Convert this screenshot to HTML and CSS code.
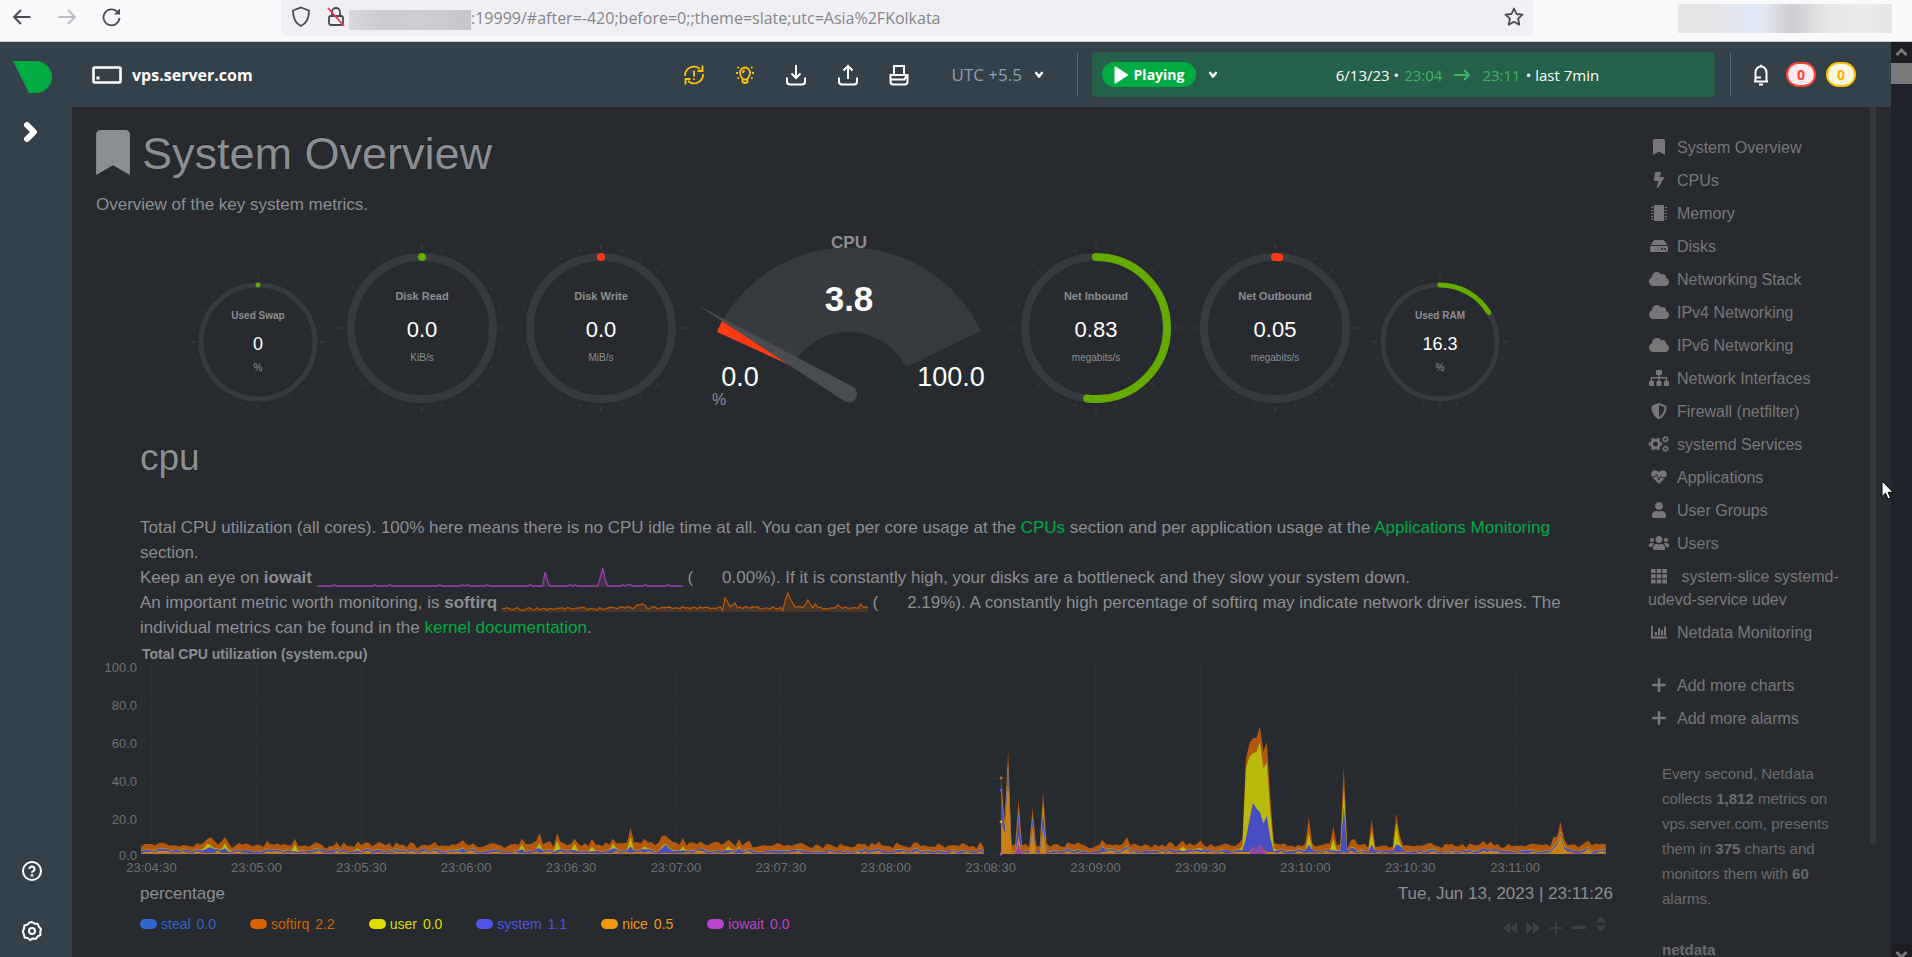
FILE: index.html
```
<!DOCTYPE html>
<html lang="en">
<head>
  <meta charset="UTF-8" />
  <meta name="viewport" content="width=device-width, initial-scale=1.0"/>
  <title>vps.server.com netdata dashboard</title>
  <link rel="stylesheet" href="styles.css">
</head>
<body>
  <!-- icons used more than once -->
  <svg class="defs" aria-hidden="true">
    <symbol id="i-bookmark" viewBox="0 0 384 512"><path d="M0 512V48C0 21.49 21.49 0 48 0h288c26.51 0 48 21.49 48 48v464L192 400 0 512z"/></symbol>
    <symbol id="i-cloud" viewBox="0 0 640 512"><path d="M537.6 226.6c4.1-10.7 6.4-22.4 6.4-34.6 0-53-43-96-96-96-19.7 0-38.1 6-53.3 16.2C367 64.2 315.3 32 256 32c-88.4 0-160 71.6-160 160 0 2.7.1 5.4.2 8.1C40.2 219.8 0 273.2 0 336c0 79.5 64.5 144 144 144h368c70.7 0 128-57.3 128-128 0-61.9-44-113.6-102.4-125.4z"/></symbol>
    <symbol id="i-plus" viewBox="0 0 448 512"><path d="M184 64q0-32 32-32h16q32 0 32 32v152h152q32 0 32 32v16q0 32-32 32H264v152q0 32-32 32h-16q-32 0-32-32V296H32q-32 0-32-32v-16q0-32 32-32h152z"/></symbol>
    <symbol id="i-caret" viewBox="0 0 10 8"><path d="M2.200 2L5 5.500 7.800 2" fill="none" stroke="currentColor" stroke-width="2.600" stroke-linecap="round" stroke-linejoin="round"/></symbol>
    <symbol id="ring" viewBox="-86 -86 172 172">
      <circle r="71" fill="none" stroke="#373a3e" stroke-width="8"/>
      <circle r="80" fill="none" stroke="#3a3d41" stroke-width="3" pathLength="360" stroke-dasharray="0.8 14.2" stroke-dashoffset="0.4"/>
      <circle r="82" fill="none" stroke="#3a3d41" stroke-width="6" pathLength="360" stroke-dasharray="0.8 89.2" stroke-dashoffset="0.4"/>
    </symbol>
    <symbol id="ring-small" viewBox="-70 -70 140 140">
      <circle r="57" fill="none" stroke="#373a3e" stroke-width="5"/>
      <circle r="64" fill="none" stroke="#3a3d41" stroke-width="3" pathLength="360" stroke-dasharray="0.8 14.2" stroke-dashoffset="0.4"/>
      <circle r="65" fill="none" stroke="#3a3d41" stroke-width="6" pathLength="360" stroke-dasharray="0.8 89.2" stroke-dashoffset="0.4"/>
    </symbol>
  </svg>

  <div class="browser">
    <div class="browser-nav">
      <button aria-label="Back"><svg width="20" height="20" viewBox="0 0 20 20"><path d="M18.500 10H2M9 3l-7 7 7 7"/></svg></button>
      <button aria-label="Forward" disabled><svg width="20" height="20" viewBox="0 0 20 20"><path d="M1.500 10H18M11 3l7 7-7 7"/></svg></button>
      <button aria-label="Reload"><svg width="20" height="20" viewBox="0 0 20 20"><path d="M17.500 11A8 8 0 1 1 15 4.500"/><path d="M18 1.500v6h-6z" fill="currentColor" stroke="none"/></svg></button>
    </div>
    <div class="urlbar">
      <svg width="20" height="22" viewBox="0 0 20 22"><path d="M10 1.500l8 3c0 8-2 12.500-8 15.500C4 17 2 12.500 2 4.500z"/></svg>
      <svg class="lock" width="20" height="22" viewBox="0 0 20 22"><rect x="3" y="10" width="14" height="9" rx="2"/><path d="M6 10V6a4 4 0 0 1 8 0v4"/><path class="slash" d="M2 2l16 18"/></svg>
      <span class="masked-host"></span>
      <input type="text" aria-label="Address" value=":19999/#after=-420;before=0;;theme=slate;utc=Asia%2FKolkata">
      <button aria-label="Bookmark this page"><svg width="22" height="22" viewBox="0 0 22 22"><path d="M11 2.500l2.500 5.500 6 .7-4.400 4 1.200 6L11 15.800 5.700 18.700l1.200-6-4.400-4 6-.7z" stroke-linejoin="round"/></svg></button>
    </div>
    <div class="masked-tools"></div>
  </div>

  <div class="window">
    <div class="app">
      <nav class="rail">
        <svg class="logo" width="40" height="32" viewBox="0 0 40 32"><path d="M0 0h23a16 16 0 0 1 0 32h-7z" fill="#00ab44"/></svg>
        <button class="expand" aria-label="Open spaces"><svg width="16" height="22" viewBox="0 0 16 22"><path d="M4 4l7 7-7 7"/></svg></button>
        <button class="help" aria-label="Help"><svg width="22" height="22" viewBox="0 0 22 22"><circle cx="11" cy="11" r="9"/><path d="M8.500 9a2.500 2.500 0 1 1 3.700 2.100q-1.200.6-1.200 1.600"/><circle cx="11" cy="15.200" r=".5"/></svg></button>
        <button class="settings" aria-label="Settings"><svg width="22" height="22" viewBox="0 0 22 22"><path d="M11 2l2.600 1.700 3.100.1 1.100 2.900 2.200 2.200-.8 3 .3 3.100-2.800 1.300-1.800 2.500-3.100-.3L9 20l-2.400-2-3-.6-.7-3L1.800 11.500l1.200-2.900.4-3.100 3-.9L8.700 2.500z" stroke-linejoin="round"/><circle cx="11" cy="11" r="3"/></svg></button>
      </nav>

      <div class="workspace">
        <header class="topbar">
          <svg class="node-icon" width="30" height="18" viewBox="0 0 30 18"><rect x="1.500" y="1.500" width="27" height="15" rx="1" fill="none" stroke="#fff" stroke-width="2.600"/><rect x="4.500" y="10.500" width="3" height="3" fill="#fff"/></svg>
          <span class="host">vps.server.com</span>

          <div class="tools">
            <button class="warn" aria-label="Update available"><svg width="22" height="22" viewBox="0 0 22 22"><path d="M2 12a9 9 0 0 1 15-7M20 10a9 9 0 0 1-15 7M19.500 1.500V7h-5M2.500 20.500V15h5M11 6.500v6M11 14.500v1.500"/></svg></button>
            <button class="warn" aria-label="What's new"><svg width="20" height="22" viewBox="0 0 20 22"><path d="M7.500 15.500c0-2-2.500-3-2.500-6.500a5 5.500 0 0 1 10 0c0 3.500-2.500 4.500-2.500 6.500zM7.500 15.500V18q2.500 2 5 0v-2.500M7.800 9a2.300 2.500 0 0 1 2-2.500M1 9h2M17 9h2M2.500 3l1.400 1M17.500 3l-1.400 1M2.500 14.500l1.400-1M17.500 14.500l-1.400-1"/></svg></button>
            <button aria-label="Import"><svg width="22" height="22" viewBox="0 0 22 22"><path d="M11 1v13M6.500 9.500L11 14l4.500-4.500M2 13.500v4q0 3 3 3h12q3 0 3-3v-4"/></svg></button>
            <button aria-label="Export"><svg width="22" height="22" viewBox="0 0 22 22"><path d="M11 15V2M6.500 6.500L11 2l4.500 4.500M2 13.500v4q0 3 3 3h12q3 0 3-3v-4"/></svg></button>
            <button aria-label="Print"><svg width="20" height="22" viewBox="1 0 20 22"><path d="M6 11V2h10v9M2.500 11h17v6.500q0 3-3 3h-11q-3 0-3-3zM3 15.500h13.500l2-4"/></svg></button>
          </div>

          <button class="utc">UTC +5.5 <svg width="10" height="8"><use href="#i-caret"/></svg></button>

          <div class="timebox">
            <button class="playing"><svg width="14" height="18" viewBox="0 0 14 18"><path d="M1.500 1.500L13 9 1.500 16.500z" fill="#fff" stroke="#fff" stroke-width="2" stroke-linejoin="round"/></svg>Playing</button>
            <button class="play-menu" aria-label="Playback options"><svg width="10" height="8"><use href="#i-caret"/></svg></button>
            <button class="range">6/13/23 • <span>23:04</span>
              <svg width="18" height="14" viewBox="0 0 18 14"><path d="M1 7h15M11 2l5 5-5 5"/></svg>
              <span>23:11</span> • last 7min</button>
          </div>

          <div class="alerts">
            <button class="bell" aria-label="Alerts"><svg width="18" height="22" viewBox="0 0 18 22"><path d="M2 17.500h14M3.500 17V8.500a5.500 6 0 0 1 11 0V17M7 20.500h4M9 2V.8M4 13.500h5"/></svg></button>
            <button class="pill critical">0</button>
            <button class="pill warning">0</button>
          </div>
        </header>

        <div class="page">
          <main>
            <h1><svg width="34" height="45"><use href="#i-bookmark"/></svg>System Overview</h1>
            <p class="lead">Overview of the key system metrics.</p>

            <div class="gauges">
              <svg class="gauge small" viewBox="-75 -112 150 183">
                <use href="#ring-small" x="-70" y="-70" width="140" height="140"/>
                <circle class="arc green" r="57" stroke-width="5" pathLength="100" stroke-dasharray="0 100"/>
                <text class="label" y="-23">Used Swap</text><text class="value" y="8">0</text><text class="unit" y="29">%</text>
              </svg>
              <svg class="gauge" viewBox="-89 -98 179 183">
                <use href="#ring" x="-86" y="-86" width="172" height="172"/>
                <circle class="arc green" r="71" stroke-width="8" pathLength="100" stroke-dasharray="0 100"/>
                <text class="label" y="-28">Disk Read</text><text class="value" y="9">0.0</text><text class="unit" y="33">KiB/s</text>
              </svg>
              <svg class="gauge" viewBox="-89 -98 179 183">
                <use href="#ring" x="-86" y="-86" width="172" height="172"/>
                <circle class="arc red" r="71" stroke-width="8" pathLength="100" stroke-dasharray="0 100"/>
                <text class="label" y="-28">Disk Write</text><text class="value" y="9">0.0</text><text class="unit" y="33">MiB/s</text>
              </svg>
              <svg class="gauge cpu" viewBox="-158 -164 316 183">
                <path d="M-132-63A146 146 0 0 1 132-63L57-27A64 64 0 0 0-57-27z" fill="#373a3e"/>
                <path d="M-132-62L-127-73-57-28z" fill="#ff3912"/>
                <path d="M-151.500-89L4.500-7A8 8 0 1 1-5 7z" fill="#494c50"/>
                <text class="label" y="-146">CPU</text><text class="value" y="-83">3.8</text>
                <text class="bound" x="-109" y="-8">0.0</text><text class="bound" x="102" y="-8">100.0</text>
                <text class="unit" x="-130" y="11">%</text>
              </svg>
              <svg class="gauge" viewBox="-89 -98 179 183">
                <use href="#ring" x="-86" y="-86" width="172" height="172"/>
                <circle class="arc green" r="71" stroke-width="8" pathLength="100" stroke-dasharray="52 100"/>
                <text class="label" y="-28">Net Inbound</text><text class="value" y="9">0.83</text><text class="unit" y="33">megabits/s</text>
              </svg>
              <svg class="gauge" viewBox="-89 -98 179 183">
                <use href="#ring" x="-86" y="-86" width="172" height="172"/>
                <circle class="arc red" r="71" stroke-width="8" pathLength="100" stroke-dasharray="1 100"/>
                <text class="label" y="-28">Net Outbound</text><text class="value" y="9">0.05</text><text class="unit" y="33">megabits/s</text>
              </svg>
              <svg class="gauge small" viewBox="-75 -112 150 183">
                <use href="#ring-small" x="-70" y="-70" width="140" height="140"/>
                <circle class="arc green" r="57" stroke-width="5" pathLength="100" stroke-dasharray="16.3 100"/>
                <text class="label" y="-23">Used RAM</text><text class="value" y="8">16.3</text><text class="unit" y="29">%</text>
              </svg>
            </div>

            <section class="cpu-section">
              <h2>cpu</h2>
              <p>Total CPU utilization (all cores). 100% here means there is no CPU idle time at all. You can get per core usage at the <a href="#cpus">CPUs</a> section and per application usage at the <a href="#apps">Applications Monitoring</a> section.</p>
              <p>Keep an eye on <b>iowait</b> <svg class="spark" id="sparkIowait" width="366" height="24"></svg> (<span class="num">0.00</span>%). If it is constantly high, your disks are a bottleneck and they slow your system down.</p>
              <p>An important metric worth monitoring, is <b>softirq</b> <svg class="spark" id="sparkSoftirq" width="366" height="24"></svg> (<span class="num">2.19</span>%). A constantly high percentage of softirq may indicate network driver issues. The individual metrics can be found in the <a href="#docs">kernel documentation</a>.</p>
            </section>

            <h3>Total CPU utilization (system.cpu)</h3>
            <svg class="chart" id="cpuChart" viewBox="0 0 1517 216" role="img" aria-label="Total CPU utilization"></svg>
            <div class="chart-info"><span>percentage</span><time>Tue, Jun 13, 2023 | 23:11:26</time></div>
            <div class="chart-foot">
              <ul class="legend">
                <li class="steal">steal <span>0.0</span></li>
                <li class="softirq">softirq <span>2.2</span></li>
                <li class="user">user <span>0.0</span></li>
                <li class="system">system <span>1.1</span></li>
                <li class="nice">nice <span>0.5</span></li>
                <li class="iowait">iowait <span>0.0</span></li>
              </ul>
              <div class="chart-tools">
                <button aria-label="Pan left"><svg width="16" height="14" viewBox="0 0 16 14"><path d="M8 1v12L1 7zM15 1v12L8 7z"/></svg></button>
                <button aria-label="Pan right"><svg width="16" height="14" viewBox="0 0 16 14"><path d="M1 1v12l7-6zM8 1v12l7-6z"/></svg></button>
                <button aria-label="Zoom in"><svg width="16" height="14"><use href="#i-plus"/></svg></button>
                <button aria-label="Zoom out"><svg width="16" height="14" viewBox="0 0 16 14"><rect x="1" y="5" width="14" height="3" rx="1"/></svg></button>
                <button class="resize" aria-label="Resize"><svg width="12" height="16" viewBox="0 0 12 16"><path d="M6 0l5.500 6.500H.5zM6 16L.5 9.500h11z"/></svg></button>
              </div>
            </div>
          </main>

          <aside>
            <ul class="menu">
              <li><a href="#system"><svg><use href="#i-bookmark"/></svg>System Overview</a></li>
              <li><a href="#cpus"><svg viewBox="0 0 320 512"><path d="M296 160H180.600l42.600-129.800C227.200 15 215.700 0 200 0H56C44 0 33.800 8.900 32.200 20.800l-32 240C-1.700 275.200 9.500 288 24 288h118.700L96.600 482.500c-3.600 15.200 8 29.500 23.300 29.500 8.400 0 16.400-4.400 20.800-12l176-304c9.300-15.900-2.200-36-20.700-36z"/></svg>CPUs</a></li>
              <li><a href="#mem"><svg viewBox="0 0 16 16"><rect x="3" width="10" height="16" rx="1"/><path d="M0 2.500h16M0 5.500h16M0 8.500h16M0 11.500h16M0 14h16" stroke="currentColor" stroke-width="1.200" stroke-dasharray="2.300 11.400"/></svg>Memory</a></li>
              <li><a href="#disk"><svg viewBox="0 0 576 512"><path d="M576 304v96c0 26.510-21.490 48-48 48H48c-26.510 0-48-21.490-48-48v-96c0-26.510 21.490-48 48-48h480c26.510 0 48 21.490 48 48zm-48-80a79.557 79.557 0 0 1 30.777 6.165L462.250 85.374A48.003 48.003 0 0 0 422.311 64H153.689a48 48 0 0 0-39.938 21.374L17.223 230.165A79.557 79.557 0 0 1 48 224h480zm-48 96c-17.673 0-32 14.327-32 32s14.327 32 32 32 32-14.327 32-32-14.327-32-32-32zm-96 0c-17.673 0-32 14.327-32 32s14.327 32 32 32 32-14.327 32-32-14.327-32-32-32z"/></svg>Disks</a></li>
              <li><a href="#net"><svg><use href="#i-cloud"/></svg>Networking Stack</a></li>
              <li><a href="#ipv4"><svg><use href="#i-cloud"/></svg>IPv4 Networking</a></li>
              <li><a href="#ipv6"><svg><use href="#i-cloud"/></svg>IPv6 Networking</a></li>
              <li><a href="#ifaces"><svg viewBox="0 0 20 16"><rect x="7" width="6" height="5" rx="1"/><rect y="11" width="5" height="5" rx="1"/><rect x="7.500" y="11" width="5" height="5" rx="1"/><rect x="15" y="11" width="5" height="5" rx="1"/><path d="M10 5v6M2.500 11V7.800h15V11" fill="none" stroke="currentColor" stroke-width="1.400"/></svg>Network Interfaces</a></li>
              <li><a href="#firewall"><svg viewBox="0 0 512 512"><path d="M466.500 83.700l-192-80a48.150 48.150 0 0 0-36.900 0l-192 80C27.700 91.100 16 108.600 16 128c0 198.500 114.500 335.700 221.500 380.300 11.800 4.900 25.100 4.900 36.900 0C360.100 472.600 496 349.300 496 128c0-19.400-11.700-36.900-29.500-44.300zM256.100 446.300l-.1-381 175.900 73.300c-3.300 151.400-82.100 261.100-175.800 307.700z"/></svg>Firewall (netfilter)</a></li>
              <li><a href="#services"><svg viewBox="0 0 20 16"><g fill="none" stroke="currentColor"><circle cx="6.500" cy="8" r="3.900" stroke-width="2.800"/><circle cx="6.500" cy="8" r="6" stroke-width="1.600" pathLength="12" stroke-dasharray="1 1" stroke-dashoffset=".5"/><circle cx="16.500" cy="3.200" r="1.900" stroke-width="1.400"/><circle cx="16.500" cy="3.200" r="3" stroke-width="1" pathLength="12" stroke-dasharray="1 1"/><circle cx="16.500" cy="12.800" r="1.900" stroke-width="1.400"/><circle cx="16.500" cy="12.800" r="3" stroke-width="1" pathLength="12" stroke-dasharray="1 1"/></g></svg>systemd Services</a></li>
              <li><a href="#applications"><svg viewBox="0 0 16 16"><path d="M8 15L1.300 8.200C-.6 6 .1 1.400 4 1.200c2 0 3 1 4 2.200 1-1.200 2-2.200 4-2.200 3.900.2 4.600 4.800 2.700 7z"/><path class="cut" d="M0 7.800h4.200l1.300-2.600 2.200 6 2-4.400 1 1.800H16"/></svg>Applications</a></li>
              <li><a href="#groups"><svg viewBox="0 0 448 512"><path d="M224 256c70.700 0 128-57.300 128-128S294.700 0 224 0 96 57.300 96 128s57.300 128 128 128zm89.600 32h-16.700c-22.200 10.200-46.900 16-72.900 16s-50.600-5.800-72.900-16h-16.700C60.200 288 0 348.200 0 422.400V464c0 26.500 21.500 48 48 48h352c26.500 0 48-21.500 48-48v-41.600c0-74.200-60.200-134.400-134.400-134.400z"/></svg>User Groups</a></li>
              <li><a href="#users"><svg viewBox="0 0 640 512"><path d="M96 224c35.300 0 64-28.700 64-64s-28.700-64-64-64-64 28.700-64 64 28.700 64 64 64zm448 0c35.300 0 64-28.700 64-64s-28.700-64-64-64-64 28.700-64 64 28.700 64 64 64zm32 32h-64c-17.600 0-33.500 7.100-45.100 18.600 40.300 22.100 68.900 62 75.100 109.400h66c17.700 0 32-14.300 32-32v-32c0-35.300-28.700-64-64-64zm-256 0c61.900 0 112-50.100 112-112S381.900 32 320 32 208 82.100 208 144s50.100 112 112 112zm76.800 32h-8.300c-20.800 10-43.900 16-68.500 16s-47.600-6-68.500-16h-8.300C179.600 288 128 339.600 128 403.200V432c0 26.500 21.500 48 48 48h288c26.500 0 48-21.500 48-48v-28.800c0-63.600-51.600-115.200-115.200-115.200zm-223.700-13.400C161.500 263.100 145.600 256 128 256H64c-35.300 0-64 28.700-64 64v32c0 17.700 14.300 32 32 32h65.900c6.300-47.400 34.900-87.300 75.200-109.400z"/></svg>Users</a></li>
              <li><a href="#slice"><svg viewBox="0 0 16 16"><path d="M0 1h4.600v4H0zM5.700 1h4.600v4H5.700zM11.400 1H16v4h-4.600zM0 6.200h4.600v4H0zM5.700 6.200h4.600v4H5.700zM11.400 6.200H16v4h-4.600zM0 11.400h4.600v4H0zM5.700 11.400h4.600v4H5.700zM11.400 11.400H16v4h-4.600z"/></svg>&nbsp;system-slice systemd-udevd-service udev</a></li>
              <li><a href="#netdata"><svg viewBox="0 0 16 16"><path d="M1 2v11.500h15" fill="none" stroke="currentColor" stroke-width="1.800"/><path d="M4 8h2v3.500H4zM7 4h2v7.500H7zM10 6h2v5.500h-2zM13 2.500h2v9h-2z"/></svg>Netdata Monitoring</a></li>
            </ul>
            <ul class="menu">
              <li><a href="#charts"><svg><use href="#i-plus"/></svg>Add more charts</a></li>
              <li><a href="#alarms"><svg><use href="#i-plus"/></svg>Add more alarms</a></li>
            </ul>
            <div class="about">
              <p>Every second, Netdata collects <b>1,812</b> metrics on vps.server.com, presents them in <b>375</b> charts and monitors them with <b>60</b> alarms.</p>
              <p><b>netdata</b></p>
            </div>
          </aside>
          <div class="inner-scroll"></div>
        </div>
      </div>
    </div>
    <div class="scrollbar">
      <svg width="20" height="21" viewBox="0 0 20 21"><path d="M5 13l5-5 5 5"/></svg>
      <div class="thumb"></div>
      <svg class="down" width="20" height="13" viewBox="0 0 20 13"><path d="M5 8l5 5 5-5"/></svg>
    </div>
  </div>

  <svg class="cursor" width="13" height="20" viewBox="0 0 13 20"><path d="M1 1v15.500l3.500-3.300L7 19l2.500-1.100L7.100 12.300H12z" fill="#fff" stroke="#000"/></svg>

  <script src="script.js"></script>
</body>
</html>
```
FILE: styles.css
```
* {
  box-sizing: border-box;
}
body {
  margin: 0;
  height: 100vh;
  display: flex;
  flex-direction: column;
  overflow: hidden;
  background: #272b30;
  color: #8b8e92;
  font-family: "Liberation Sans", Arial, sans-serif;
  font-size: 17px;
}
button {
  padding: 0;
  border: 0;
  background: none;
  color: inherit;
  font: inherit;
  display: flex;
  align-items: center;
  justify-content: center;
}
ul {
  list-style: none;
  margin: 0;
  padding: 0;
}
svg {
  flex: none;
}
.defs {
  position: absolute;
  width: 0;
  height: 0;
}

/* browser toolbar */
.browser {
  flex: none;
  display: flex;
  height: 42px;
  background: #f9f9fb;
  border-bottom: 1px solid #ccccce;
  color: #4a4953;
}
.browser svg {
  fill: none;
  stroke: currentColor;
  stroke-width: 1.8;
}
.browser-nav {
  display: flex;
  gap: 25px;
  width: 281px;
  height: 34px;
  padding-left: 12px;
}
.browser-nav button:disabled {
  color: #bcbcc1;
}
.urlbar {
  flex: 1;
  display: flex;
  align-items: center;
  height: 36px;
  padding: 0 8px 3px 10px;
  background: #f0f0f4;
  border-radius: 0 0 5px 5px;
}
.urlbar .lock {
  margin: 0 3px 0 15px;
}
.urlbar .slash {
  stroke: #f0325c;
}
.masked-host {
  width: 122px;
  height: 20px;
  margin-top: 7px;
  background: linear-gradient(90deg, #d9d9dd, #cbcbcf 30%, #d0d0d4 55%, #c6c6ca);
}
.urlbar input {
  flex: 1;
  padding: 2px 0 0;
  border: 0;
  background: none;
  color: #85858b;
  font-family: "Open Sans", sans-serif;
  font-size: 16px;
}
.masked-tools {
  width: 214px;
  height: 29px;
  margin: 4px 20px 0 145px;
  background: linear-gradient(90deg, #e6e6e6 15%, #e1e8f5 30%, #e3e8f2 40%, #cdcdd2 53%, #e7e7e8 70%, #ececec 88%, #e4e4e5);
}

.window {
  flex: 1;
  display: flex;
  min-height: 0;
}
.app {
  flex: 1;
  display: flex;
  min-width: 0;
}
.rail {
  width: 72px;
  padding: 19px 0 15px;
  display: flex;
  flex-direction: column;
  background: #35414a;
  color: #fff;
}
.rail button svg {
  fill: none;
  stroke: #fff;
  stroke-width: 2;
}
.rail .logo {
  margin-left: 13px;
}
.rail .expand {
  width: 62px;
  margin-top: 28px;
}
.rail .expand svg {
  stroke-width: 6;
  stroke-linecap: round;
  stroke-linejoin: round;
}
.rail .help {
  width: 64px;
  margin: auto 0 38px;
}
.rail .settings {
  width: 64px;
}
.workspace {
  flex: 1;
  display: flex;
  flex-direction: column;
  min-width: 0;
}

/* dashboard header */
.topbar {
  flex: none;
  display: flex;
  align-items: center;
  height: 65px;
  padding: 0 35px 0 20px;
  background: #35414a;
  color: #fff;
  font-family: "Open Sans", sans-serif;
  font-size: 15px;
}
.host {
  margin-left: 10px;
  font-size: 16px;
  font-weight: bold;
}
.tools {
  display: flex;
  justify-content: space-between;
  width: 226px;
  margin-left: auto;
}
.tools svg, .bell svg {
  fill: none;
  stroke: currentColor;
  stroke-width: 2;
}
.tools .warn {
  color: #ffc300;
}
.tools .warn svg {
  stroke-width: 1.8;
}
.utc {
  gap: 12px;
  height: 45px;
  width: 169px;
  padding-right: 33px;
  justify-content: flex-end;
  border-right: 1px solid #536775;
  color: #8f9ea9;
  font-size: 17px;
}
.utc svg {
  color: #fff;
}
.timebox {
  display: flex;
  align-items: center;
  width: 623px;
  height: 45px;
  margin: 0 15px 0 14px;
  padding: 0 10px;
  background: #25614a;
  border-radius: 4px;
}
.playing {
  gap: 6px;
  width: 94px;
  height: 25px;
  border-radius: 13px;
  background: #00ab44;
  font-size: 14px;
  font-weight: bold;
}
.play-menu {
  width: 34px;
  height: 25px;
}
.range {
  flex: 1;
  gap: 5px;
}
.range span, .range svg {
  color: #42b461;
}
.range svg {
  margin: 0 6px;
  fill: none;
  stroke: currentColor;
  stroke-width: 2;
}
.alerts {
  display: flex;
  align-items: center;
  height: 45px;
  gap: 10px;
  padding-left: 21px;
  border-left: 1px solid #536775;
}
.bell {
  margin-right: 6px;
}
.pill {
  width: 30px;
  height: 25px;
  border: 2px solid #ff4136;
  border-radius: 13px;
  background: #ffebef;
  color: #ff4136;
  font-size: 14px;
  font-weight: bold;
}
.pill.warning {
  border-color: #ffc300;
  background: #fff8e1;
  color: #f9b200;
}

.page {
  flex: 1;
  display: flex;
  min-height: 0;
  overflow: hidden;
}
main {
  flex: 1;
  min-width: 0;
  padding: 16px 0 0 24px;
}
h1 {
  display: flex;
  align-items: center;
  gap: 12px;
  margin: 0;
  font-size: 45px;
  font-weight: normal;
  line-height: 62px;
  text-shadow: -1px -1px 0 rgba(0,0,0,0.3);
}
h1 svg {
  margin-bottom: 4px;
  fill: currentColor;
}
.lead {
  margin: 7px 0 13px;
  line-height: 25px;
}

/* gauges */
.gauges {
  display: flex;
  justify-content: center;
  padding-right: 12px;
}
.gauge {
  width: 179px;
  height: 183px;
  text-anchor: middle;
}
.gauge.small {
  width: 150px;
}
.gauge.cpu {
  width: 316px;
}
.gauge .arc {
  fill: none;
  stroke-linecap: round;
  transform: rotate(-90deg);
}
.gauge .green {
  stroke: #66aa00;
}
.gauge .red {
  stroke: #ff3912;
}
.gauge .label {
  fill: #8b8e92;
  font-size: 11px;
  font-weight: bold;
}
.gauge .value {
  fill: #fff;
  font-size: 22px;
}
.gauge .unit {
  fill: #8b8e92;
  font-size: 10px;
}
.gauge.small .label {
  font-size: 10px;
}
.gauge.small .value {
  font-size: 18px;
}
.gauge.cpu .label {
  font-size: 17px;
}
.gauge.cpu .value {
  font-size: 35px;
  font-weight: bold;
}
.gauge.cpu .bound {
  fill: #fff;
  font-size: 27px;
}
.gauge.cpu .unit {
  font-size: 16px;
}

/* cpu section */
.cpu-section {
  padding: 0 7px 0 44px;
}
h2 {
  margin: 24px 0 37px;
  font-size: 37px;
  font-weight: normal;
  line-height: 41px;
  text-shadow: -1px -1px 0 rgba(0,0,0,0.3);
}
.cpu-section p {
  margin: 0;
  line-height: 25px;
}
a {
  color: #00ab44;
  text-decoration: none;
}
.spark {
  vertical-align: middle;
  margin: -6px 0 0;
}
.num {
  display: inline-block;
  width: 62px;
  text-align: right;
}
h3 {
  margin: 8px 0 0 46px;
  font-size: 14px;
  line-height: 12px;
}
.chart {
  display: block;
  width: 100%;
}
.chart text {
  fill: #6d7175;
  font-size: 13px;
}
.chart-info {
  display: flex;
  justify-content: space-between;
  padding-left: 44px;
  margin-top: 6px;
  line-height: 24px;
}
.chart-foot {
  display: flex;
  justify-content: space-between;
  padding: 0 6px 0 44px;
  margin-top: 7px;
}
.legend {
  display: flex;
  gap: 34px;
  font-size: 14px;
  line-height: 18px;
}
.legend li {
  display: flex;
  align-items: center;
  gap: 6px;
}
.legend li::before {
  content: "";
  width: 17px;
  height: 10px;
  margin-right: -2px;
  border-radius: 5px;
  background: currentColor;
}
.legend .steal { color: #3366cc; }
.legend .softirq { color: #d66300; }
.legend .user { color: #dddd00; }
.legend .system { color: #5054e6; }
.legend .nice { color: #ee9911; }
.legend .iowait { color: #bb44cc; }
.chart-tools {
  display: flex;
  gap: 7px;
  padding-top: 8px;
  color: #3c4045;
}
.chart-tools svg {
  fill: currentColor;
}
.chart-tools .resize {
  margin: -8px 0 0 1px;
}

/* right menu */
aside {
  flex: none;
  width: 257px;
  padding: 24px 28px 0 35px;
  color: #6a6b6d;
}
.menu {
  margin-bottom: 20px;
  font-size: 16px;
  line-height: 23px;
}
.menu a {
  display: block;
  padding: 5px 0;
  color: #777779;
}
.menu svg {
  width: 22px;
  height: 16px;
  margin-right: 7px;
  vertical-align: -2px;
  fill: currentColor;
}
.menu .cut {
  fill: none;
  stroke: #272b30;
}
.about {
  padding-left: 14px;
  font-size: 15px;
  line-height: 25px;
}
.about p {
  margin: 26px 0;
}
.inner-scroll {
  width: 6px;
  height: 738px;
  margin-right: 15px;
  border-radius: 0 0 3px 3px;
  background: #35383d;
}

.scrollbar {
  display: flex;
  flex-direction: column;
  width: 21px;
  background: #20232b;
}
.scrollbar svg {
  width: 100%;
  background: #1d1e21;
  fill: none;
  stroke: #77787b;
  stroke-width: 3;
}
.scrollbar .thumb {
  height: 21px;
  background: #79797b;
}
.scrollbar .down {
  margin-top: auto;
}
.cursor {
  position: absolute;
  right: 18px;
  top: 480px;
}
```
FILE: script.js
```
const SVG_NS = 'http://www.w3.org/2000/svg';
const COLORS = {
  iowait: '#993fa5',
  nice: '#c68217',
  system: '#494dc3',
  user: '#b8ba0c',
  softirq: '#b4580b'
};

// one sample per second, values are stacked tops: iowait, nice, system, user, softirq
const events = {
  18: [0, 0.5, 2, 3, 6], 19: [0, 0.5, 3, 5.5, 8], 20: [0, 0.5, 3.5, 4.5, 8.8], 21: [0, 0.5, 2.5, 3, 7],
  23: [0, 0.5, 2, 2.5, 6.5], 24: [0, 0.5, 3, 5.5, 8.9], 25: [0, 0.5, 1.5, 2.5, 6],
  44: [0, 0.5, 1.5, 5, 8], 62: [0, 0.5, 2, 3, 6.6], 92: [0, 0.5, 3, 3.5, 7.2],
  109: [0, 0.5, 2.5, 5, 8], 114: [0, 0.5, 3, 5.5, 11], 119: [0, 0.5, 2, 7, 11],
  124: [0, 0.5, 2, 5.5, 8], 129: [0, 0.5, 1.5, 4, 8], 135: [0, 0.5, 3, 5.5, 8],
  140: [0, 0.5, 4, 9, 14], 144: [0, 0.5, 2.5, 4, 8], 149: [0, 0.5, 3, 4, 9.5],
  150: [0, 0.5, 5, 5.5, 9.8], 151: [0, 0.5, 3, 3.5, 8], 155: [0, 0.5, 2, 4, 8.5],
  168: [0, 0.5, 2, 4, 7.5], 171: [0, 0.5, 3, 4, 8],
  246: [0, 17, 33.5, 34, 40], 247: [0, 11, 14, 15, 18], 248: [0, 40, 47, 48, 54], 249: [0, 0.8, 1, 1.5, 5],
  251: [5, 9, 22, 23, 28.5], 255: [0, 15, 19, 20, 24.5], 258: [0, 14, 22, 26, 33],
  275: [0, 1, 4, 4.5, 7.5], 282: [0, 3, 4, 4.5, 9], 298: [0, 0.8, 1.5, 4, 7], 303: [0, 0.8, 2, 3, 7.2],
  315: [0, 1, 2, 4, 8], 316: [0, 1, 8, 45, 50], 317: [0, 1, 18, 51, 58], 318: [3.5, 3.8, 27, 53, 61],
  319: [1, 1.3, 24, 53.5, 61], 320: [5, 5.2, 22, 59, 67], 321: [2, 2.2, 16, 45, 54], 322: [0, 1, 20, 48, 59],
  323: [0, 1, 8, 22, 30], 324: [0, 1, 1.5, 3, 6],
  334: [0, 0.8, 5, 11, 19.5], 341: [0, 0.8, 2, 8, 14.5], 344: [0, 1, 25, 35, 46], 347: [0, 0.8, 3, 3.5, 8],
  352: [0, 0.8, 5, 12, 18.5], 359: [0, 0.8, 5, 16, 21], 360: [0, 0.8, 4.5, 6, 10],
  404: [0, 3, 4, 4.5, 9], 405: [0, 5, 6, 6.5, 9], 406: [0, 10, 11, 12, 17], 407: [0, 3, 4, 5, 8], 414: [0, 3, 3.5, 4, 7]
};

// small repeatable noise so the idle load looks the same on every load
let seed = 7;
function noise() {
  seed = (seed * 16807) % 2147483647;
  return seed / 2147483647;
}

function sampleAt(i) {
  const nice = 0.4 + Math.pow(noise(), 3) * 1.6;
  const system = nice + 0.5 + noise() * 0.9;
  const user = system + noise() * 0.4;
  const busy = (i > 105 && i < 175) ? 0.8 : 0;
  const softirq = user + 1.7 + noise() * 2 + busy;
  return events[i] || [0.1, nice, system, user, softirq];
}

function add(parent, name, attrs, text) {
  const el = document.createElementNS(SVG_NS, name);
  for (const key in attrs) el.setAttribute(key, attrs[key]);
  if (text) el.textContent = text;
  parent.appendChild(el);
  return el;
}

function drawChart() {
  const svg = document.getElementById('cpuChart');
  const left = 45, right = 1510, top = 4, bottom = 194;
  const x = i => left + i * (right - left) / 419;
  const y = v => bottom - v * (bottom - top) / 100;
  const samples = [];
  for (let i = 0; i < 420; i++) samples.push(sampleAt(i));

  for (let v = 0; v <= 100; v += 20) {
    add(svg, 'path', { d: `M${left} ${y(v)}H${right}`, stroke: '#283436', 'stroke-width': 1 });
    add(svg, 'text', { x: 41, y: v === 0 ? 200 : y(v) + 8, 'text-anchor': 'end' }, v.toFixed(1));
  }
  add(svg, 'path', { d: `M${left} ${top}V${bottom}`, stroke: '#283436' });
  for (let k = 0; k < 14; k++) {
    const sec = 4 * 60 + 30 + k * 30;
    const label = '23:' + String(Math.floor(sec / 60)).padStart(2, '0') + ':' + String(sec % 60).padStart(2, '0');
    add(svg, 'path', { d: `M${x(3 + k * 30)} ${top}V${bottom}`, stroke: '#283436' });
    add(svg, 'text', { x: x(3 + k * 30), y: 212, 'text-anchor': 'middle' }, label);
  }

  // no samples were collected between 242 and 245
  [[0, 241], [246, 419]].forEach(([from, to]) => {
    ['softirq', 'user', 'system', 'nice', 'iowait'].forEach((name, n) => {
      let d = `M${x(from)} ${bottom}`;
      for (let i = from; i <= to; i++) d += `L${x(i).toFixed(1)} ${y(samples[i][4 - n]).toFixed(1)}`;
      d += `L${x(to)} ${bottom}z`;
      add(svg, 'path', { d: d, fill: COLORS[name] });
    });
  });
  [[40, '#d66300'], [33.5, '#5054e6'], [17, '#ee9911'], [0, '#bb44cc']].forEach(([v, color]) => {
    add(svg, 'circle', { cx: x(246), cy: y(v), r: 1.5, fill: color });
  });
}

function drawSpark(id, values, color) {
  const svg = document.getElementById(id);
  const step = 366 / (values.length - 1);
  const line = values.map((v, i) => `${(i * step).toFixed(1)} ${(22 - v).toFixed(1)}`).join('L');
  add(svg, 'path', { d: `M0 23L${line}L366 23z`, fill: color, 'fill-opacity': 0.25 });
  add(svg, 'path', { d: `M${line}`, fill: 'none', stroke: color, 'stroke-width': 1.3 });
}

drawChart();

const iowait = new Array(147).fill(0);
[7, 23, 29, 49, 58, 60, 68, 85, 101, 103, 122, 124, 125, 131, 140].forEach(i => iowait[i] = 1.3);
iowait[91] = 14;
iowait[92] = 5;
iowait[113] = 9;
iowait[114] = 18;
iowait[115] = 6;
drawSpark('sparkIowait', iowait, '#993fa5');

const softirq = [];
for (let i = 0; i < 147; i++) {
  softirq.push(1 + noise() * 2.6 + (i > 45 ? 1 : 0));
}
[[54, 6], [55, 6], [56, 7], [57, 6], [89, 13], [90, 9], [92, 6], [93, 8], [113, 11], [114, 18], [115, 12], [116, 8], [121, 6], [122, 11], [123, 7], [125, 7], [134, 6], [143, 7]].forEach(([i, v]) => softirq[i] = v);
softirq[8] = softirq[88] = softirq[112] = 0.5;
drawSpark('sparkSoftirq', softirq, '#b4580b');
```
